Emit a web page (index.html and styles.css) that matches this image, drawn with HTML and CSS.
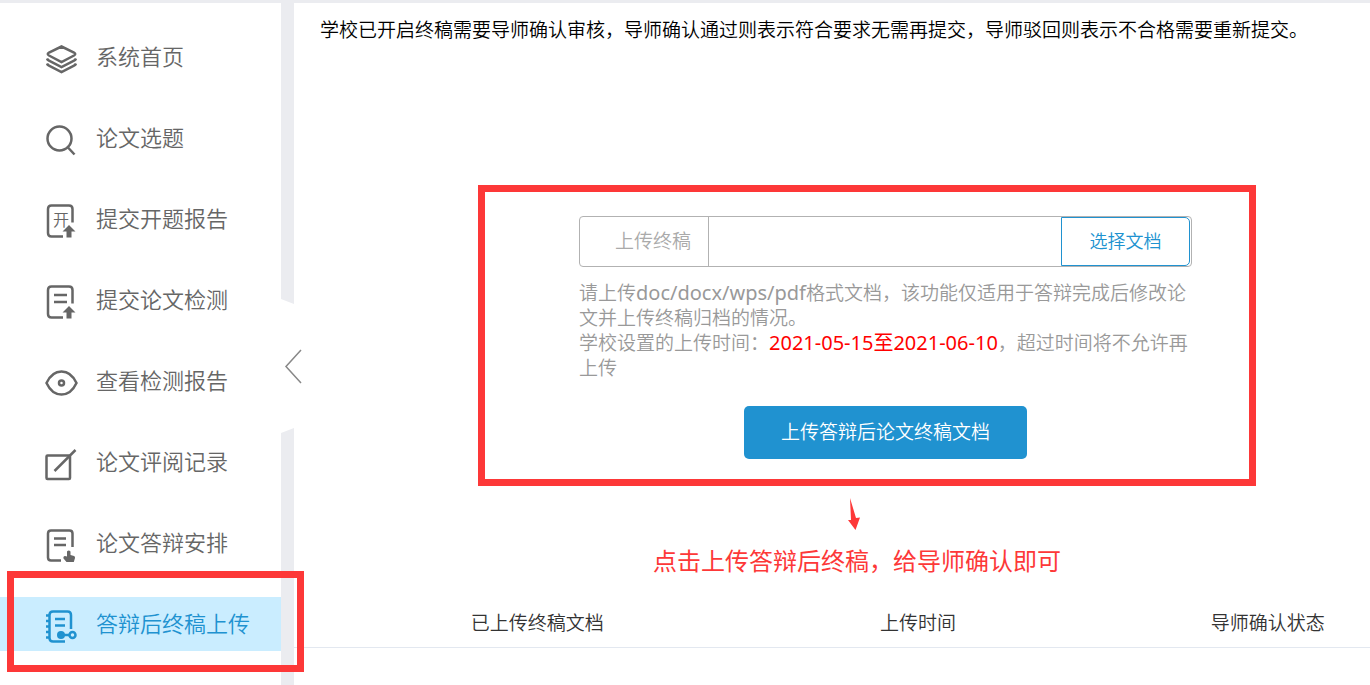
FILE: index.html
```html
<!DOCTYPE html>
<html lang="zh-CN">
<head>
  <meta charset="UTF-8">
  <meta name="viewport" content="width=device-width, initial-scale=1.0">
  <title>答辩后终稿上传</title>
  <link rel="stylesheet" href="styles.css">
</head>
<body>
  <div class="layout">
    <nav class="sidebar">
      <ul class="menu">
        <li>
          <a href="#" class="menu-item">
            <svg class="icon" viewBox="0 0 36 40">
              <path d="M17.500 9.500 30 15.500Q32.500 17 30 18.500L17.500 25 5 18.500Q2.500 17 5 15.500Z"/>
              <path d="M3 21.500Q3.500 23 5 23.700L17.500 30 30 23.700Q31.500 23 32 21.500M3 26.500Q3.500 28 5 28.700L17.500 35 30 28.700Q31.500 28 32 26.500"/>
            </svg>
            <span>系统首页</span>
          </a>
        </li>
        <li>
          <a href="#" class="menu-item">
            <svg class="icon" viewBox="0 0 36 40">
              <circle cx="15.500" cy="20.500" r="12"/>
              <path d="M24 29.500 30.500 36.500"/>
            </svg>
            <span>论文选题</span>
          </a>
        </li>
        <li>
          <a href="#" class="menu-item">
            <svg class="icon" viewBox="0 0 36 40">
              <path d="M28.500 23.500V10Q28.500 6.500 25 6.500H7.500Q4 6.500 4 10V34Q4 37.500 7.500 37.500H19"/>
              <text class="icon-text" x="17" y="27">开</text>
              <path class="solid" d="M25 26 31.500 32.500H27.500V38.500H22.500V32.500H18.500Z"/>
            </svg>
            <span>提交开题报告</span>
          </a>
        </li>
        <li>
          <a href="#" class="menu-item">
            <svg class="icon" viewBox="0 0 36 40">
              <path d="M28.500 23.500V10Q28.500 6.500 25 6.500H7.500Q4 6.500 4 10V34Q4 37.500 7.500 37.500H19M10 15H23M10 22H23"/>
              <path class="solid" d="M25 26 31.500 32.500H27.500V38.500H22.500V32.500H18.500Z"/>
            </svg>
            <span>提交论文检测</span>
          </a>
        </li>
        <li>
          <a href="#" class="menu-item">
            <svg class="icon" viewBox="0 0 36 40">
              <path d="M2.500 22C6 14.500 11 10.500 17.500 10.500S29 14.500 32.500 22C29 29.500 24 33.500 17.500 33.500S6 29.500 2.500 22Z"/>
              <circle cx="17.500" cy="22" r="2.500"/>
            </svg>
            <span>查看检测报告</span>
          </a>
        </li>
        <li>
          <a href="#" class="menu-item">
            <svg class="icon" viewBox="0 0 36 40">
              <rect x="2.500" y="13.500" width="23.500" height="23.500" rx="1"/>
              <path d="M10.500 29 31.500 8"/>
            </svg>
            <span>论文评阅记录</span>
          </a>
        </li>
        <li>
          <a href="#" class="menu-item">
            <svg class="icon" viewBox="0 0 36 40">
              <path d="M28.500 24V10.500Q28.500 7.500 25.500 7.500H7Q4 7.500 4 10.500V34.500Q4 37.500 7 37.500H17M10 15.500H22M10 22H22"/>
              <path class="solid" d="M23 28.500Q24.700 26.500 26.500 28.500V32L30 33Q31.300 33.500 31 35L29.800 39H22.500L19.500 35.500Q19 33 21 33L23 33.500Z"/>
            </svg>
            <span>论文答辩安排</span>
          </a>
        </li>
        <li>
          <a href="#" class="menu-item active">
            <svg class="icon" viewBox="0 0 36 40">
              <path d="M27 25V11Q27 7.500 23.500 7.500H9Q5.500 7.500 5.500 11V34Q5.500 37.500 9 37.500H21M11 15H21M11 21.500H21"/>
              <path d="M2 11.500H6M2 17H6M2 22.500H6M2 28H6M2 33.500H6M17 31H25"/>
              <circle class="solid" cx="17" cy="31" r="4"/>
              <circle cx="28.500" cy="31" r="3"/>
            </svg>
            <span>答辩后终稿上传</span>
          </a>
        </li>
      </ul>
      <div class="menu-mark"></div>
    </nav>

    <div class="divider">
      <button type="button" class="collapse" aria-label="收起菜单">
        <svg viewBox="0 0 21 134">
          <path class="notch" d="M0 0 13 5V129L0 134Z"/>
          <path class="chevron" d="M20 51 5 67.500 20 84"/>
        </svg>
      </button>
    </div>

    <main class="content">
      <p class="notice">学校已开启终稿需要导师确认审核，导师确认通过则表示符合要求无需再提交，导师驳回则表示不合格需要重新提交。</p>

      <form class="upload-box">
        <div class="file-row">
          <label for="file-name">上传终稿</label>
          <input type="text" id="file-name" readonly>
          <button type="button" class="choose">选择文档</button>
        </div>
        <p class="tips">请上传<span class="formats">doc/docx/wps/pdf</span>格式文档，该功能仅适用于答辩完成后修改论文并上传终稿归档的情况。<br>学校设置的上传时间：<span class="date">2021-05-15至2021-06-10</span>，超过时间将不允许再上传</p>
        <button type="submit" class="submit">上传答辩后论文终稿文档</button>
      </form>

      <div class="guide">
        <svg class="arrow" viewBox="0 0 18 32">
          <path d="M2 0 8 20 12 19.500 7.500 32 0 22 3 22Z"/>
        </svg>
        <p>点击上传答辩后终稿，给导师确认即可</p>
      </div>

      <table class="records">
        <thead>
          <tr>
            <th class="col-file">已上传终稿文档</th>
            <th class="col-time">上传时间</th>
            <th class="col-status">导师确认状态</th>
          </tr>
        </thead>
      </table>
    </main>
  </div>
</body>
</html>
```
FILE: styles.css
```css
* {
  margin: 0;
  padding: 0;
  box-sizing: border-box;
}

:root {
  --color-blue: #2092d0;
  --color-active: #caedff;
  --color-mark: #fd3838;
  --color-page: #ebecf0;
  --color-text: #666;
  --color-border: #b2b2b2;
}

body {
  font-family: "Noto Sans", "Noto Sans CJK SC", sans-serif;
  font-size: 19px;
  font-weight: 350;
  line-height: 25px;
  background-color: #fff;
}

button,
input {
  font: inherit;
}

button {
  cursor: pointer;
}

.layout {
  display: flex;
  min-height: 100vh;
  border-top: 3px solid var(--color-page);
}

/* sidebar */
.sidebar {
  position: relative;
  flex: 0 0 281px;
  padding-top: 27px;
}

.menu {
  display: flex;
  flex-direction: column;
  gap: 27px;
  list-style: none;
}

.menu-item {
  display: flex;
  align-items: center;
  gap: 16px;
  height: 54px;
  padding-left: 44px;
  font-size: 22px;
  color: var(--color-text);
  text-decoration: none;
}

.menu-item span {
  padding-bottom: 1px;
}

.menu-item.active {
  background-color: var(--color-active);
  color: var(--color-blue);
}

.icon {
  width: 36px;
  height: 40px;
  fill: none;
  stroke: currentColor;
  stroke-width: 2.5;
}

.icon .solid {
  fill: currentColor;
  stroke: none;
}

.icon-text {
  font-size: 16px;
  text-anchor: middle;
  fill: currentColor;
  stroke: none;
}

.menu-mark {
  position: absolute;
  left: 7px;
  right: -23px;
  top: 568px;
  height: 101px;
  border: 7px solid var(--color-mark);
  z-index: 2;
  pointer-events: none;
}

/* divider with collapse handle */
.divider {
  flex: 0 0 13px;
  min-width: 0;
  padding-top: 296px;
  background-color: var(--color-page);
}

.collapse {
  display: block;
  width: 21px;
  height: 134px;
  border: none;
  background: none;
}

.collapse svg {
  display: block;
  width: 21px;
  height: 134px;
}

.notch {
  fill: #fff;
}

.chevron {
  fill: none;
  stroke: #888;
  stroke-width: 1.5;
}

/* content */
.content {
  flex: 1;
  min-width: 0;
}

.notice {
  padding: 15px 26px 0;
  color: #000;
}

.upload-box {
  margin: 142px 114px 0 184px;
  padding: 24px 57px 20px 94px;
  border: 7px solid var(--color-mark);
}

.file-row {
  display: flex;
  height: 51px;
  border: 1px solid var(--color-border);
  border-radius: 4px;
}

.file-row label {
  flex: 0 0 128px;
  padding-right: 17px;
  line-height: 49px;
  text-align: right;
  color: #aaa;
}

.file-row input {
  flex: 1;
  min-width: 0;
  padding: 0 12px;
  border: none;
  border-left: 1px solid var(--color-border);
  background: none;
  outline: none;
}

.choose {
  flex: 0 0 129px;
  margin-right: 1px;
  border: 1px solid var(--color-blue);
  border-radius: 0 5px 5px 0;
  background-color: #fff;
  font-size: 18px;
  color: var(--color-blue);
}

.tips {
  margin: 14px 0 25px;
  color: #999;
}

.formats,
.date {
  font-size: 20px;
  font-weight: 400;
  line-height: 20px;
}

.date {
  color: #f00;
}

.submit {
  display: block;
  width: 283px;
  height: 53px;
  margin: 0 auto;
  border: none;
  border-radius: 5px;
  background-color: var(--color-blue);
  color: #fff;
}

.guide {
  display: flex;
  flex-direction: column;
  align-items: center;
  gap: 15px;
  padding: 12px 0 0 50px;
  font-size: 24px;
  line-height: 32px;
  font-weight: 400;
  color: var(--color-mark);
}

.arrow {
  width: 18px;
  height: 32px;
  fill: var(--color-mark);
}

.records {
  width: 100%;
  margin-top: 20px;
  table-layout: fixed;
  border-collapse: collapse;
  color: #333;
}

.records th {
  height: 50px;
  padding-top: 4px;
  font-weight: inherit;
  border-bottom: 1px solid #e3e8f0;
}

.records .col-file {
  width: 35%;
  padding-left: 110px;
}

.records .col-time {
  width: 46%;
}

.records .col-status {
  width: 19%;
}
```
